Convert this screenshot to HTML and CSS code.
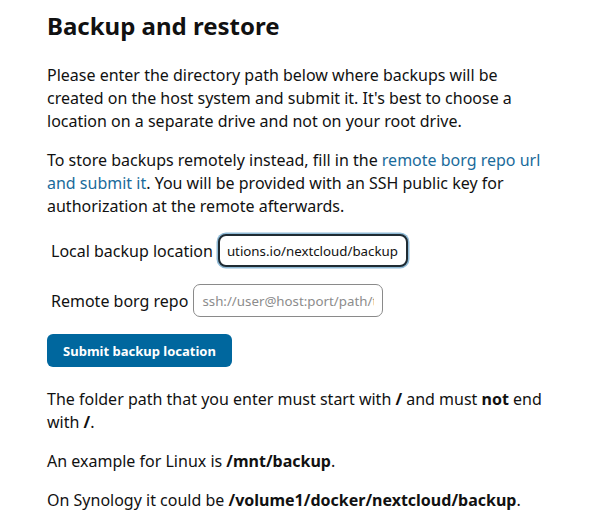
FILE: index.html
```html
<!DOCTYPE html>
<html>
<head>
<meta charset="utf-8">
<link rel="stylesheet" href="styles.css">
</head>
<body>
<main class="page">
  <h2 class="title">Backup and restore</h2>
  <p class="text">Please enter the directory path below where backups will be created on the host system and submit it. It's best to choose a location on a separate drive and not on your root drive.</p>
  <p class="text">To store backups remotely instead, fill in the <a class="link" href="#">remote borg repo url and submit it</a>. You will be provided with an SSH public key for authorization at the remote afterwards.</p>
  <form class="form">
    <div class="row">
      <label class="label">Local backup location</label>
      <input class="field field-focus" type="text" value="utions.io/nextcloud/backup">
    </div>
    <div class="row">
      <label class="label">Remote borg repo</label>
      <input class="field" type="text" placeholder="ssh://user@host:port/path/to/repo">
    </div>
    <button class="btn" type="button">Submit backup location</button>
  </form>
  <p class="text">The folder path that you enter must start with <strong>/</strong> and must <strong>not</strong> end with <strong>/</strong>.</p>
  <p class="text">An example for Linux is <strong>/mnt/backup</strong>.</p>
  <p class="text">On Synology it could be <strong>/volume1/docker/nextcloud/backup</strong>.</p>
</main>
</body>
</html>
```
FILE: styles.css
```css
html, body {
  margin: 0;
  padding: 0;
  background: #ffffff;
}
body {
  font-family: "Noto Sans", "Open Sans", sans-serif;
  color: #111111;
}
.page {
  width: 498px;
  margin-left: 47px;
  padding-top: 8px;
}
.title {
  font-size: 24px;
  font-weight: 700;
  line-height: 36px;
  margin: 0 0 20px 0;
}
.text {
  font-size: 16px;
  line-height: 23px;
  margin: 0 0 16px 0;
}
.link {
  color: #1a6b9b;
  text-decoration: none;
}
.form {
  margin: 0 0 21px 0;
}
.row {
  display: flex;
  align-items: center;
  gap: 5px;
  padding-left: 4px;
  margin-bottom: 17px;
}
.label {
  font-size: 16px;
}
.field {
  box-sizing: border-box;
  width: 190px;
  height: 33px;
  padding: 0 8px;
  border: 1px solid #8a8a8a;
  border-radius: 7px;
  font-family: "Noto Sans", "Open Sans", sans-serif;
  font-size: 13.3px;
  color: #111;
  outline: none;
  background: #fff;
}
.field::placeholder {
  color: #8c8c8c;
}
.field-focus {
  border: 2px solid #1f2b33;
  padding: 0 7px;
  box-shadow: 0 0 0 1.5px #8fbad6;
  border-radius: 8px;
}
.btn {
  display: block;
  box-sizing: border-box;
  width: 185px;
  height: 33px;
  border: none;
  border-radius: 6px;
  background: #00679e;
  color: #ffffff;
  font-family: "Noto Sans", "Open Sans", sans-serif;
  font-size: 13px;
  font-weight: 700;
  padding: 0;
}
```
